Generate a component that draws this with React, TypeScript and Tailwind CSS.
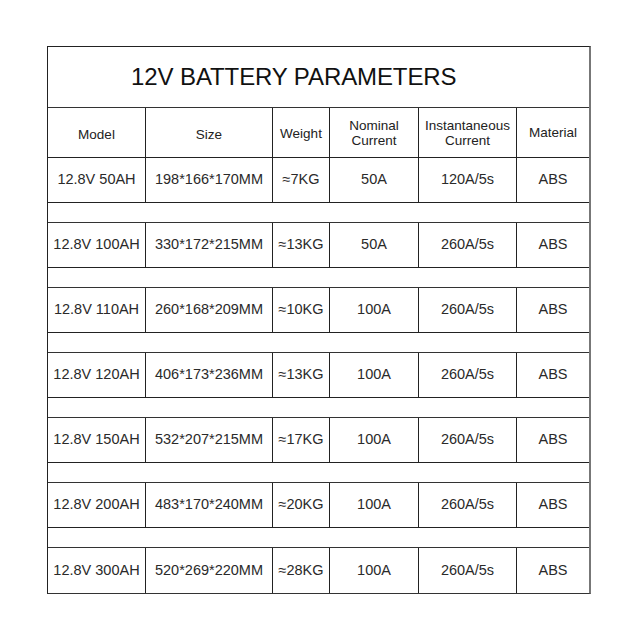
import React from "react";

const rows = [
  ["12.8V 50AH", "198*166*170MM", "≈7KG", "50A", "120A/5s", "ABS"],
  ["12.8V 100AH", "330*172*215MM", "≈13KG", "50A", "260A/5s", "ABS"],
  ["12.8V 110AH", "260*168*209MM", "≈10KG", "100A", "260A/5s", "ABS"],
  ["12.8V 120AH", "406*173*236MM", "≈13KG", "100A", "260A/5s", "ABS"],
  ["12.8V 150AH", "532*207*215MM", "≈17KG", "100A", "260A/5s", "ABS"],
  ["12.8V 200AH", "483*170*240MM", "≈20KG", "100A", "260A/5s", "ABS"],
  ["12.8V 300AH", "520*269*220MM", "≈28KG", "100A", "260A/5s", "ABS"],
];

const grid = "grid grid-cols-[98px_127px_57px_89px_98px_1fr]";

export default function App() {
  return (
    <div
      className="w-[640px] h-[640px] bg-white pt-[46px] pl-[47px]"
      style={{ fontFamily: '"Liberation Sans", Arial, sans-serif' }}
    >
      <div className="w-[544px] border-t border-l border-b border-t-[#222] border-l-[#222] border-b-[#333] border-r-2 border-r-[#777]">
        <div className="h-[61px] border-b border-[#333] flex items-center pl-[83px] text-[24px] text-[#111] leading-none tracking-[-0.1px]">
          12V BATTERY PARAMETERS
        </div>
        <div className={`${grid} h-[50px] border-b border-[#222] text-[13.5px] leading-[15px] text-[#222]`}>
          <div className="border-r border-[#222] flex items-center justify-center pt-[4px]">Model</div>
          <div className="border-r border-[#222] flex items-center justify-center pt-[4px]">Size</div>
          <div className="border-r border-[#222] flex items-center justify-center pt-[2px]">Weight</div>
          <div className="border-r border-[#222] flex items-center justify-center text-center">
            Nominal
            <br />
            Current
          </div>
          <div className="border-r border-[#222] flex items-center justify-center text-center">
            Instantaneous
            <br />
            Current
          </div>
          <div className="flex items-center justify-center">Material</div>
        </div>
        {rows.map((r, i) => (
          <React.Fragment key={i}>
            {i > 0 && <div className="h-[20px] border-b border-[#333]" />}
            <div
              className={`${grid} h-[45px] text-[14.5px] text-[#2a2a2a] ${
                i < rows.length - 1 ? "border-b border-[#222]" : ""
              }`}
            >
              {r.map((c, j) => (
                <div
                  key={j}
                  className={`flex items-center justify-center whitespace-nowrap ${
                    j < 5 ? "border-r border-[#222]" : ""
                  }`}
                >
                  {c}
                </div>
              ))}
            </div>
          </React.Fragment>
        ))}
      </div>
    </div>
  );
}
